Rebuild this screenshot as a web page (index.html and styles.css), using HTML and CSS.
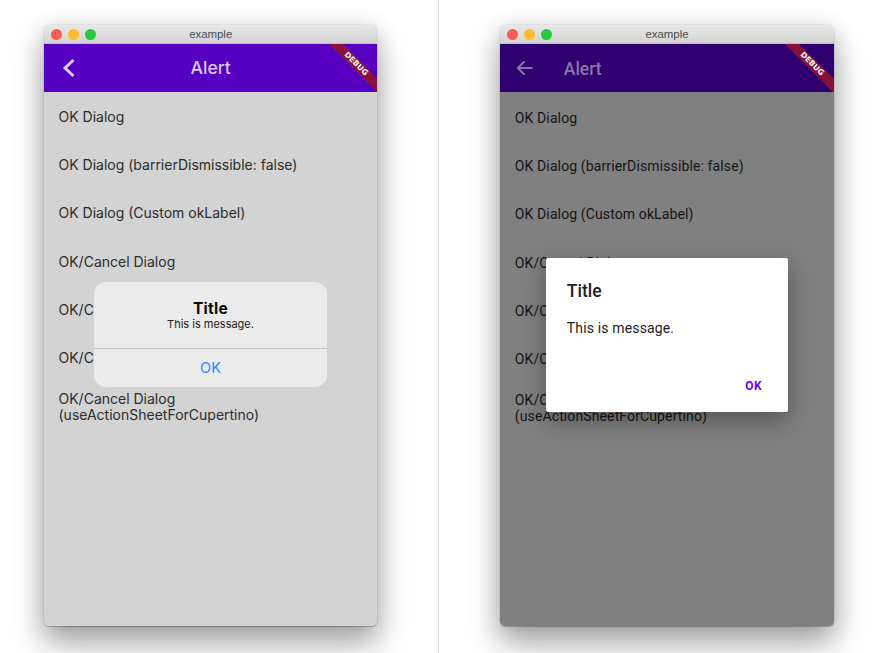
FILE: index.html
```html
<!DOCTYPE html>
<html lang="en">
<head>
<meta charset="utf-8">
<title>Alert dialogs</title>
<link rel="stylesheet" href="styles.css">
</head>
<body>
<main class="page">
  <section class="pane pane-ios">
    <div class="window">
      <header class="titlebar">
        <span class="lights"><i class="light red"></i><i class="light yellow"></i><i class="light green"></i></span>
        <span class="window-title">example</span>
      </header>
      <div class="appbar">
        <svg class="back" width="14" height="20" viewBox="0 0 14 20"><path d="M11.5 2 L3 10 L11.5 18" fill="none" stroke="currentColor" stroke-width="3"/></svg>
        <span class="appbar-title">Alert</span>
        <div class="ribbon"><span>DEBUG</span></div>
      </div>
      <ul class="list">
        <li>OK Dialog</li>
        <li>OK Dialog (barrierDismissible: false)</li>
        <li>OK Dialog (Custom okLabel)</li>
        <li>OK/Cancel Dialog</li>
        <li>OK/Cancel Dialog</li>
        <li>OK/Cancel Dialog</li>
        <li>OK/Cancel Dialog<br>(useActionSheetForCupertino)</li>
      </ul>
      <div class="dialog">
        <div class="dialog-body">
          <h2>Title</h2>
          <p>This is message.</p>
        </div>
        <div class="dialog-action">OK</div>
      </div>
    </div>
  </section>
  <section class="pane pane-md">
    <div class="window">
      <header class="titlebar">
        <span class="lights"><i class="light red"></i><i class="light yellow"></i><i class="light green"></i></span>
        <span class="window-title">example</span>
      </header>
      <div class="appbar">
        <svg class="back" width="18" height="16" viewBox="0 0 18 16"><path d="M16.5 8 H2 M8.5 1.2 L1.8 8 L8.5 14.8" fill="none" stroke="currentColor" stroke-width="2"/></svg>
        <span class="appbar-title">Alert</span>
        <div class="ribbon"><span>DEBUG</span></div>
      </div>
      <ul class="list">
        <li>OK Dialog</li>
        <li>OK Dialog (barrierDismissible: false)</li>
        <li>OK Dialog (Custom okLabel)</li>
        <li>OK/Cancel Dialog</li>
        <li>OK/Cancel Dialog</li>
        <li>OK/Cancel Dialog</li>
        <li>OK/Cancel Dialog<br>(useActionSheetForCupertino)</li>
      </ul>
      <div class="dialog">
        <div class="dialog-body">
          <h2>Title</h2>
          <p>This is message.</p>
        </div>
        <div class="dialog-action">OK</div>
      </div>
    </div>
  </section>
</main>
</body>
</html>
```
FILE: styles.css
```css
* { box-sizing: border-box; }
html, body { margin: 0; height: 100%; background: #fff; overflow: hidden; }
body { font-family: "Roboto", "Liberation Sans", sans-serif; }

.page { display: flex; width: 879px; height: 653px; }
.pane { height: 653px; padding-top: 24.5px; }
.pane-ios { width: 439px; padding-left: 44px; border-right: 1px solid #dcdcdc; }
.pane-md { width: 440px; padding-left: 61.3px; }

.window {
  position: relative;
  width: 333.4px;
  height: 601.5px;
  border-radius: 5px;
  box-shadow: 0 0 1px rgba(0,0,0,.45), 0 1px 1px rgba(0,0,0,.2), 0 18px 32px rgba(0,0,0,.32), 0 4px 22px rgba(0,0,0,.14);
  display: flex;
  flex-direction: column;
}
.titlebar {
  flex: none;
  position: relative;
  height: 19px;
  display: flex;
  align-items: center;
  justify-content: center;
  padding-top: 3px;
  background: linear-gradient(#e9e9e9, #d3d3d3);
  border-radius: 5px 5px 0 0;
  border-bottom: 1px solid #bdbdbd;
}
.lights { position: absolute; left: 7.2px; top: 4.4px; display: flex; gap: 6px; }
.light { display: block; width: 11px; height: 11px; border-radius: 50%; }
.red { background: #fc5b57; }
.yellow { background: #febb2e; }
.green { background: #27c940; }
.window-title { font: 400 11.4px/1 "Liberation Sans", sans-serif; color: #4c4c4c; }

.appbar {
  flex: none;
  position: relative;
  height: 48.8px;
  overflow: hidden;
  display: flex;
  align-items: center;
}
.ribbon {
  position: absolute;
  left: 272px;
  top: 15.5px;
  width: 80px;
  height: 10px;
  transform: rotate(45deg);
  display: flex;
  align-items: center;
  justify-content: center;
  color: #fff;
  font: 700 7.6px/1 "DejaVu Sans", sans-serif;
}

.list { flex: 1; margin: 0; padding: 0; list-style: none; border-radius: 0 0 5px 5px; line-height: 16.4px; }
.list li { height: 48.35px; display: flex; align-items: center; padding-left: 14.5px; white-space: nowrap; }

.dialog { position: absolute; display: flex; flex-direction: column; }
.dialog h2, .dialog p { margin: 0; }

/* iOS variant */
.pane-ios .appbar { background: #5600c1; color: #d8cbe9; }
.pane-ios .back { margin-left: 18px; }
.pane-ios .appbar-title { position: absolute; left: 0; right: 0; text-align: center; font: 500 17.6px/1 "Inter", sans-serif; }
.pane-ios .ribbon { background: #8b1140; }
.pane-ios .list { background: #d3d3d3; color: #2c2c2c; padding-top: .5px; font-family: "Inter", sans-serif; font-size: 14px; }
.pane-ios .dialog { left: 50px; top: 257px; width: 233px; height: 105.5px; background: #ebebeb; border-radius: 12px; text-align: center; }
.pane-ios .dialog-body { height: 67px; padding-top: 19px; border-bottom: 1px solid #c4c4c4; }
.pane-ios .dialog h2 { font: 700 15.5px/16px "Inter", sans-serif; letter-spacing: .3px; color: #0c0c0c; }
.pane-ios .dialog p { font: 400 11px/14px "Inter", sans-serif; color: #222; }
.pane-ios .dialog-action { flex: 1; display: flex; align-items: center; justify-content: center; font: 400 14.5px/1 "Inter", sans-serif; color: #1a8cff; }

/* Material variant */
.pane-md .appbar { background: #310070; color: #8b74a8; }
.pane-md .back { margin-left: 16px; }
.pane-md .appbar-title { margin-left: 29.5px; font: 500 17.5px/1 "Roboto", sans-serif; padding-top: 3px; }
.pane-md .ribbon { background: #85103a; }
.pane-md .list { background: #808080; color: #141414; padding-top: 1.5px; font-size: 14px; letter-spacing: .12px; }
.pane-md .dialog { left: 46px; top: 233.5px; width: 242px; height: 154px; background: #fff; border-radius: 2px; box-shadow: 0 8px 24px rgba(0,0,0,.35); padding: 23px 20.5px 0; color: #222; }
.pane-md .dialog-body { flex: 1; }
.pane-md .dialog h2 { font: 500 17.5px/20px "Roboto", sans-serif; }
.pane-md .dialog p { margin-top: 19px; font: 400 14px/17px "Roboto", sans-serif; letter-spacing: .15px; }
.pane-md .dialog-action { position: absolute; right: 26px; bottom: 19px; font: 700 12px/14px "Roboto", sans-serif; letter-spacing: .6px; color: #6a00ee; }
```
